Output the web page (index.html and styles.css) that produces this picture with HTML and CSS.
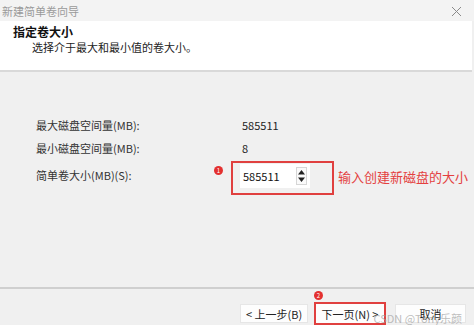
FILE: index.html
```html
<!DOCTYPE html>
<html lang="zh-CN">
<head>
    <meta charset="UTF-8">
    <title>新建简单卷向导</title>
    <link rel="stylesheet" href="styles.css">
</head>
<body>
    <div class="window">
        <div class="titlebar">
            <span class="title">新建简单卷向导</span>
            <svg class="close" width="11" height="11" viewBox="0 0 11 11">
                <path d="M1 1 L10 10 M10 1 L1 10" stroke="#8a8a8a" stroke-width="1" fill="none"/>
            </svg>
        </div>
        <div class="header">
            <h1>指定卷大小</h1>
            <p>选择介于最大和最小值的卷大小。</p>
        </div>
        <div class="body">
            <div class="fields">
                <div class="label">最大磁盘空间量(MB):</div>
                <div class="value">585511</div>
                <div class="label">最小磁盘空间量(MB):</div>
                <div class="value">8</div>
                <div class="label label-size">简单卷大小(MB)(S):</div>
                <div class="size-row">
                    <div class="mark">
                        <span class="badge badge-one">1</span>
                        <div class="spin">
                            <span class="spin-value">585511</span>
                            <span class="spin-arrows">
                                <svg width="11" height="18" viewBox="0 0 11 18">
                                    <rect x="0.5" y="0.5" width="10" height="17" fill="#fafafa" stroke="#d6d6d6"/>
                                    <path d="M5.5 3 L9 7.5 L2 7.5 Z M2 10.5 L9 10.5 L5.5 15 Z" fill="#222"/>
                                </svg>
                            </span>
                        </div>
                    </div>
                    <span class="note">输入创建新磁盘的大小</span>
                </div>
            </div>
        </div>
        <div class="footer">
            <button class="btn">&lt; 上一步(B)</button>
            <div class="mark mark-btn">
                <span class="badge badge-two">2</span>
                <button class="btn">下一页(N) &gt;</button>
            </div>
            <button class="btn btn-cancel">取消</button>
            <span class="watermark">CSDN @Tony乐颜</span>
        </div>
    </div>
</body>
</html>
```

FILE: styles.css
```css
body {
    margin: 0;
    padding: 0;
    font-family: "Noto Sans CJK SC", "Liberation Sans", sans-serif;
    font-size: 11px;
    color: #222;
    background: #f0f0f0;
}
.window {
    width: 474px;
    height: 325px;
    overflow: hidden;
    position: relative;
    background: #f0f0f0;
}
.titlebar {
    height: 21px;
    display: flex;
    align-items: center;
    justify-content: space-between;
    padding: 0 12px 0 2px;
    background: #f3f3f3;
}
.title {
    color: #9a9a9a;
    font-size: 11px;
}
.close {
    margin-top: 2px;
}
.header {
    background: #fff;
    margin-right: 2px;
    border-bottom: 2px solid #d9d9d9;
    box-sizing: border-box;
    height: 51px;
    padding-top: 4px;
}
.header h1 {
    margin: 0 0 0 13px;
    font-size: 12px;
    font-weight: bold;
    line-height: 14px;
    color: #111;
}
.header p {
    margin: 2px 0 0 32px;
    font-size: 11px;
    line-height: 12px;
    color: #222;
}
.body {
    height: 217px;
    padding-top: 43px;
    box-sizing: border-box;
    border-bottom: 2px solid #cfcfcf;
}
.fields {
    display: grid;
    grid-template-columns: 195px 1fr;
    row-gap: 3px;
    padding-left: 36px;
    align-items: start;
}
.label {
    height: 20px;
    line-height: 20px;
    color: #333;
}
.label-size {
    margin-top: 4px;
}
.value {
    padding-left: 11px;
    line-height: 20px;
    color: #222;
}
.size-row {
    display: flex;
    align-items: center;
}
.mark {
    position: relative;
    border: 2px solid #e0403f;
}
.badge {
    position: absolute;
    width: 9px;
    height: 9px;
    border-radius: 50%;
    background: #e3302f;
    color: #fff;
    font-size: 6px;
    line-height: 9px;
    text-align: center;
}
.badge-one {
    left: -19px;
    top: 3px;
}
.spin {
    width: 70px;
    height: 24px;
    margin: 1px 22px 5px 7px;
    background: #fff;
    display: flex;
    align-items: center;
    justify-content: space-between;
    box-sizing: border-box;
    padding: 0 3px;
}
.spin-value {
    font-size: 11px;
    color: #111;
}
.spin-arrows {
    display: flex;
}
.note {
    margin-left: 4px;
    margin-top: -3px;
    font-size: 13px;
    color: #e4403f;
}
.footer {
    display: flex;
    align-items: center;
    padding: 13px 6px 0 240px;
    position: relative;
}
.btn {
    width: 68px;
    height: 19px;
    padding: 0;
    background: #fdfdfd;
    border: 1px solid #e6e6e6;
    font-family: "Noto Sans CJK SC", "Liberation Sans", sans-serif;
    font-size: 11px;
    color: #222;
}
.mark-btn {
    margin-left: 6px;
    display: flex;
}
.mark-btn .btn {
    width: 68px;
    border: none;
}
.badge-two {
    left: -2px;
    top: -13px;
}
.btn-cancel {
    margin-left: 9px;
    width: 71px;
}
.watermark {
    position: absolute;
    right: 12px;
    top: 21px;
    font-size: 11px;
    color: rgba(160, 160, 160, 0.7);
}
```
